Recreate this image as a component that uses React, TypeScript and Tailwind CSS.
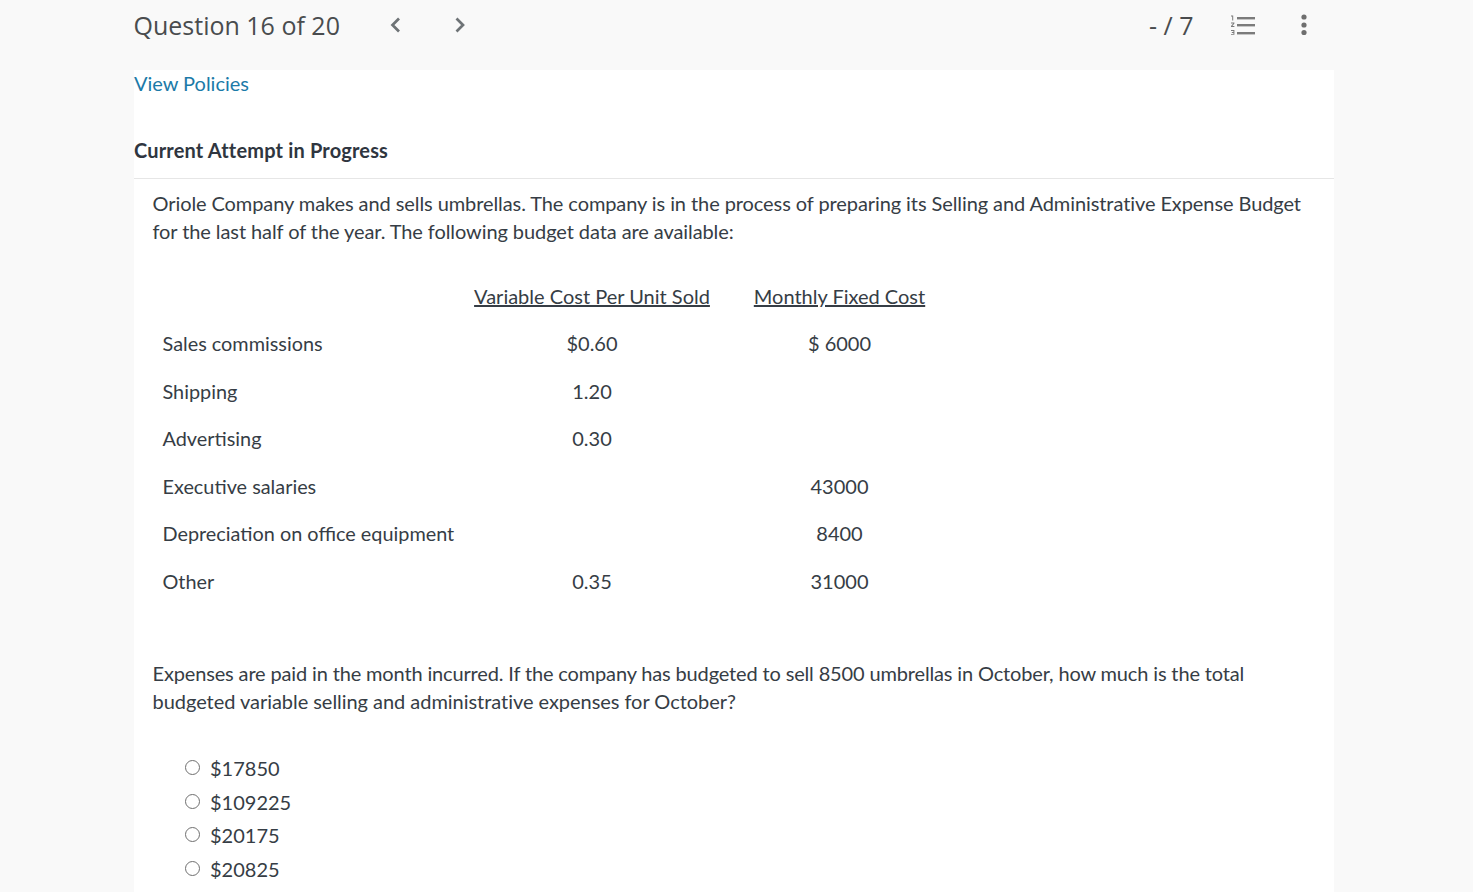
import React from "react";

const rows = [
  ["Sales commissions", "$0.60", "$ 6000"],
  ["Shipping", "1.20", ""],
  ["Advertising", "0.30", ""],
  ["Executive salaries", "", "43000"],
  ["Depreciation on office equipment", "", "8400"],
  ["Other", "0.35", "31000"],
];
const options = ["$17850", "$109225", "$20175", "$20825"];

export default function App() {
  return (
    <div className="h-[892px] overflow-hidden bg-[#f9f9f9] font-['Lato',sans-serif] text-[#363d45]">
      <div className="mx-auto w-[1205px]">
        <header className="flex h-[70px] w-[1200px] items-center">
          <h1 className="w-[255px] -translate-x-[0.5px] pb-[20px] font-['Open_Sans',sans-serif] text-[25px] leading-[34px] text-[#494c4e]">Question 16 of 20</h1>
          <button className="mb-[20px] flex w-[12px] justify-center text-[#6e7376]">
            <svg className="shrink-0" width="16" height="20" viewBox="0 0 16 20" fill="none" stroke="currentColor" strokeWidth="2.7"><path d="M12 3.5 5.5 10l6.5 6.5" /></svg>
          </button>
          <button className="mb-[20px] ml-[53px] flex w-[12px] justify-center text-[#6e7376]">
            <svg className="shrink-0" width="16" height="20" viewBox="0 0 16 20" fill="none" stroke="currentColor" strokeWidth="2.7"><path d="M4.5 3.5 11 10l-6.5 6.5" /></svg>
          </button>
          <div className="ml-auto flex items-center pb-[20px]">
            <span className="translate-x-[0.5px] font-['Open_Sans',sans-serif] text-[25px] leading-[34px] text-[#494c4e]">- / 7</span>
            <svg className="ml-[37px]" width="26" height="22" viewBox="0 0 26 22" fill="#7b7b7b">
              <rect x="7" y="3" width="18" height="2.4" />
              <rect x="7" y="10" width="18" height="2.4" />
              <rect x="7" y="18" width="18" height="2.4" />
              <path d="M1 1.5h2.2v5H2.2V2.5H1zM1 8.5h3.4v1L2.4 12h2v1H1v-1l2.2-2.6H1zM1 16h3.4v4.8H1v-.9h2.4v-1H1.8V18h1.6v-1.1H1z" />
            </svg>
            <svg className="ml-[44px] mr-[26px]" width="8" height="24" viewBox="0 0 8 24" fill="#6f6f6f">
              <circle cx="4" cy="4" r="2.6" /><circle cx="4" cy="12" r="2.6" /><circle cx="4" cy="19.5" r="2.6" />
            </svg>
          </div>
        </header>
        <main className="h-[822px] w-[1200px] bg-white">
          <a className="block text-[20px] leading-[26px] tracking-[-0.02px] text-[#1c7aa8]">View Policies</a>
          <h2 className="mt-[40px] border-b border-[#e6e6e6] pb-[14px] text-[20px] font-bold leading-[28px] tracking-[0.17px] text-[#2f3640]">Current Attempt in Progress</h2>
          <div className="px-[18.5px] pt-[10px]">
            <p className="text-[20px] leading-[28px] tracking-[-0.085px]">Oriole Company makes and sells umbrellas. The company is in the process of preparing its Selling and Administrative Expense Budget for the last half of the year. The following budget data are available:</p>
            <table className="mt-[26px] border-collapse text-[20px]">
              <thead>
                <tr className="h-[48.5px] underline">
                  <th className="w-[314.5px] font-normal"></th>
                  <th className="w-[250px] px-[5px] pt-[2px] text-center font-normal">Variable Cost Per Unit Sold</th>
                  <th className="w-[245px] px-[5px] pt-[2px] text-center font-normal">Monthly Fixed Cost</th>
                </tr>
              </thead>
              <tbody>
                {rows.map((r) => (
                  <tr key={r[0]} className="h-[47.5px]">
                    <td className="pl-[10px] pt-[2px] text-[19.85px]">{r[0]}</td>
                    <td className="text-center">{r[1]}</td>
                    <td className="text-center">{r[2]}</td>
                  </tr>
                ))}
              </tbody>
            </table>
            <p className="mt-[54.5px] text-[20px] leading-[28px] tracking-[-0.15px]">Expenses are paid in the month incurred. If the company has budgeted to sell 8500 umbrellas in October, how much is the total <span className="tracking-[-0.04px]">budgeted variable selling and administrative expenses for October?</span></p>
            <div className="mt-[36.2px] flex flex-col pl-[32.5px]">
              {options.map((o) => (
                <label key={o} className="flex h-[33.6px] items-center text-[20px]">
                  <span className="mb-[1px] h-[15px] w-[15px] rounded-full border-[1.5px] border-[#6f6f6f] bg-white" />
                  <span className="ml-[10px]">{o}</span>
                </label>
              ))}
            </div>
          </div>
        </main>
      </div>
    </div>
  );
}
